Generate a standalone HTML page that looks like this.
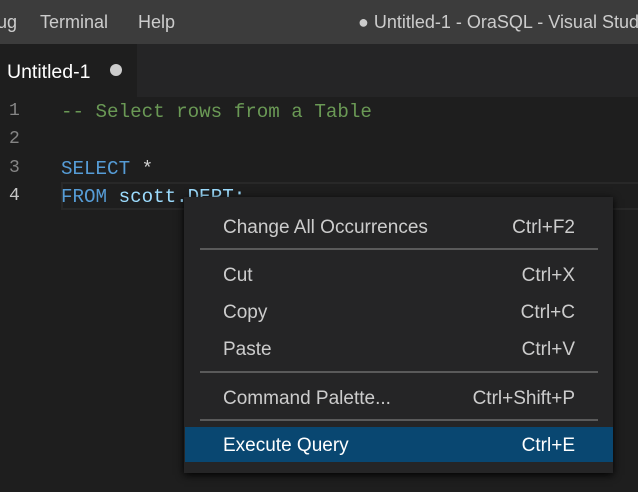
<!DOCTYPE html>
<html><head><style>
*{margin:0;padding:0;box-sizing:border-box}
body{width:638px;height:492px;background:#1e1e1e;position:relative;overflow:hidden;font-family:"Liberation Sans",sans-serif}
.title{position:absolute;left:0;top:0;width:638px;height:44px;background:#3c3c3c;color:#ccc;font-size:18px;overflow:hidden}
.title span{position:absolute;top:12px;white-space:nowrap}
.tabs{position:absolute;left:0;top:44px;width:638px;height:53px;background:#252526}
.tab{position:absolute;left:0;top:0;width:137px;height:53px;background:#1e1e1e;color:#fff;font-size:19.5px}
.code{position:absolute;font-family:"Liberation Mono",monospace;font-size:19.2px;white-space:pre}
.ln{position:absolute;left:9px;font-family:"Liberation Mono",monospace;font-size:18px;color:#858585}
.menu{position:absolute;left:184px;top:197px;width:429px;height:276px;background:#252526;box-shadow:0 2px 8px #000;color:#ccc;font-size:19px}
.it{position:absolute;left:0;width:429px;height:35px;line-height:37px}
.it .l{position:absolute;left:39px}
.it .r{position:absolute;right:38px}
.sep{position:absolute;left:16px;width:398px;height:2px;background:#5a5a5a}
</style></head><body>
<div class="title"><span style="left:-3px">ug</span><span style="left:40px">Terminal</span><span style="left:138px">Help</span><span style="left:358px">● Untitled-1 - OraSQL - Visual Studio Code</span></div>
<div class="tabs"><div class="tab"><span style="position:absolute;left:7px;top:17px">Untitled-1</span><span style="position:absolute;left:110px;top:20px;width:12px;height:12px;border-radius:50%;background:#ccc"></span></div></div>
<div style="position:absolute;left:61px;top:182px;width:580px;height:28px;border:2px solid #282828"></div>
<div class="ln" style="top:101px">1</div>
<div class="ln" style="top:129px">2</div>
<div class="ln" style="top:158px">3</div>
<div class="ln" style="top:186px;color:#c6c6c6">4</div>
<div class="code" style="left:61px;top:101px;color:#6a9955">-- Select rows from a Table</div>
<div class="code" style="left:61px;top:158px;color:#569cd6">SELECT <span style="color:#d4d4d4">*</span></div>
<div class="code" style="left:61px;top:186px;color:#569cd6">FROM <span style="color:#9cdcfe">scott.DEPT;</span></div>
<div class="menu">
<div class="it" style="top:12px"><span class="l">Change All Occurrences</span><span class="r">Ctrl+F2</span></div>
<div class="sep" style="top:51px"></div>
<div class="it" style="top:60px"><span class="l">Cut</span><span class="r">Ctrl+X</span></div>
<div class="it" style="top:97px"><span class="l">Copy</span><span class="r">Ctrl+C</span></div>
<div class="it" style="top:134px"><span class="l">Paste</span><span class="r">Ctrl+V</span></div>
<div class="sep" style="top:174px"></div>
<div class="it" style="top:183px"><span class="l">Command Palette...</span><span class="r">Ctrl+Shift+P</span></div>
<div class="sep" style="top:222px"></div>
<div class="it" style="top:230px;left:1px;width:428px;background:#094771;color:#fff"><span class="l" style="left:38px">Execute Query</span><span class="r">Ctrl+E</span></div>
</div>
</body></html>
